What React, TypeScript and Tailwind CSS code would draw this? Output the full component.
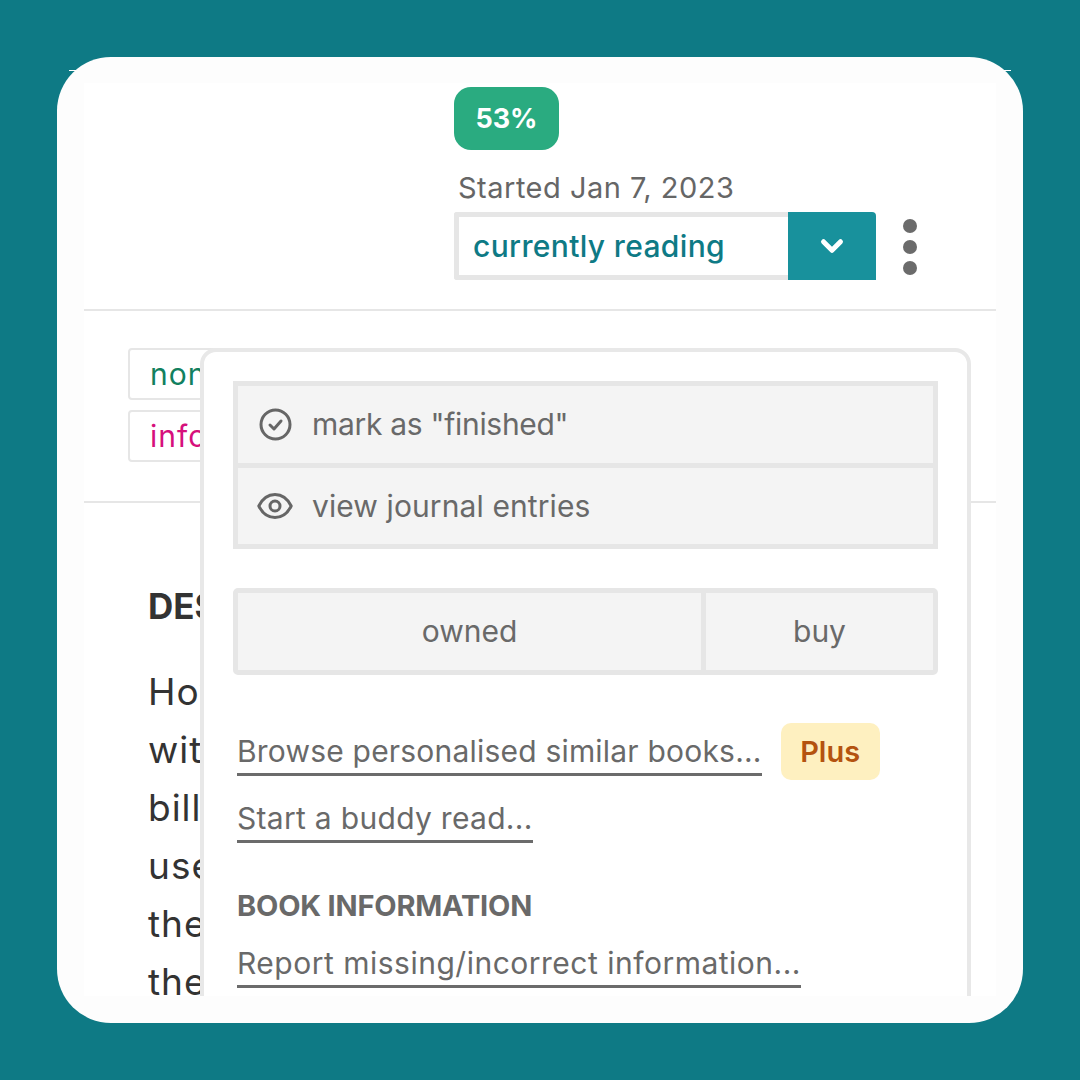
import { ChevronDown } from "lucide-react";

const font = "font-['Inter','Liberation_Sans',sans-serif]";

const bodyLines = ["How", "with", "bill", "use", "the", "the"];

function CircleCheckIcon() {
  return (
    <svg width="33" height="33" viewBox="0 0 33 33" fill="none" stroke="#666" strokeWidth="3">
      <circle cx="16.500" cy="16.500" r="14.500" />
      <path d="M11 17l4 4 7-8" strokeLinecap="round" strokeLinejoin="round" />
    </svg>
  );
}

function EyeIcon() {
  return (
    <svg width="36" height="28" viewBox="0 0 36 28" fill="none" stroke="#666" strokeWidth="3">
      <path d="M1.800 14C5.500 6.500 11 2.500 18 2.500S30.500 6.500 34.200 14C30.500 21.500 25 25.500 18 25.500S5.500 21.500 1.800 14Z" strokeLinejoin="round" />
      <circle cx="18" cy="14" r="5" />
    </svg>
  );
}

function UnderlinedLink({ children, tracking }: { children: string; tracking: string }) {
  return (
    <a className={`inline-block border-b-[3px] border-[#6b6b6b] pb-[2px] text-[30px] leading-[40px] text-[#696969] ${tracking}`}>
      {children}
    </a>
  );
}

function Popover() {
  return (
    <div className="absolute left-[116px] top-[265px] h-[700px] w-[771px] rounded-t-[16px] border-4 border-[#e8e8e8] bg-white px-[29px] pt-[29px]">
      <div className="border-[5px] border-[#e6e6e6] bg-[#f4f4f4] text-[30px] text-[#696969]">
        <div className="flex h-[77px] items-center gap-[20px] pl-[21px]">
          <CircleCheckIcon />
          <span className="tracking-[-0.3px]">mark as "finished"</span>
        </div>
        <div className="flex h-[81px] items-center gap-[19px] border-t-[5px] border-[#e6e6e6] pl-[19px]">
          <EyeIcon />
          <span className="tracking-[0.1px]">view journal entries</span>
        </div>
      </div>

      <div className="mt-[39px] flex h-[87px] rounded-[5px] border-[5px] border-[#e6e6e6] bg-[#f4f4f4] text-[30px] text-[#696969]">
        <div className="flex w-[468px] items-center justify-center border-r-[5px] border-[#e6e6e6]">owned</div>
        <div className="flex flex-1 items-center justify-center">buy</div>
      </div>

      <div className="pl-[4px]">
        <div className="mt-[48px] flex items-center gap-[19px]">
          <UnderlinedLink tracking="tracking-[0.2px]">Browse personalised similar books...</UnderlinedLink>
          <span className="mb-[4px] flex h-[57px] w-[99px] items-center justify-center rounded-[10px] bg-[#fef0c0] text-[29px] font-semibold text-[#b4530f]">
            Plus
          </span>
        </div>
        <div className="mt-[14px]">
          <UnderlinedLink tracking="tracking-[0.3px]">Start a buddy read...</UnderlinedLink>
        </div>
        <h3 className="mt-[43px] text-[29px] font-bold leading-[40px] tracking-[-0.2px] text-[#696969]">BOOK INFORMATION</h3>
        <div className="mt-[17px]">
          <UnderlinedLink tracking="tracking-[0.5px]">Report missing/incorrect information...</UnderlinedLink>
        </div>
      </div>
    </div>
  );
}

export default function App() {
  return (
    <div className={`${font} relative h-[1080px] w-[1080px] bg-[#0e7a85] p-[57px]`}>
      <span className="absolute left-[69px] top-[70px] h-px w-[942px] bg-white" />
      <div className="relative h-[966px] overflow-hidden rounded-[54px] bg-[#fdfdfd] px-[27px] pb-[27px] pt-[26px]">
        <div className="relative h-[913px] overflow-hidden bg-white">
          <div className="flex h-[228px] flex-col border-b-2 border-[#e6e6e6] pl-[370px] pt-[4px]">
            <span className="flex h-[63px] w-[105px] items-center justify-center rounded-[17px] bg-[#2aab80] pt-[1px] text-[27px] font-bold text-white">
              53%
            </span>
            <span className="ml-[4px] mt-[20px] text-[29px] leading-[36px] tracking-[0.5px] text-[#666]">Started Jan 7, 2023</span>
            <div className="mt-[6px] flex items-center">
              <div className="flex h-[68px] w-[334px] items-center rounded-l-[3px] border-y-[5px] border-l-[5px] border-[#e6e6e6] pl-[14px] text-[30px] font-medium tracking-[0.35px] text-[#0e7a85]">
                currently reading
              </div>
              <div className="flex h-[68px] w-[88px] items-center justify-center rounded-tr-[4px] bg-[#18919c] text-white">
                <ChevronDown size={34} strokeWidth={3.5} />
              </div>
              <div className="ml-[27px] mt-[2px] flex flex-col gap-[7px]">
                <span className="size-[14px] rounded-full bg-[#6b6b6b]" />
                <span className="size-[14px] rounded-full bg-[#6b6b6b]" />
                <span className="size-[14px] rounded-full bg-[#6b6b6b]" />
              </div>
            </div>
          </div>

          <div className="flex h-[192px] flex-col gap-[10px] border-b-2 border-[#e6e6e6] pl-[44px] pt-[37px] text-[30px] tracking-[1px]">
            <span className="flex h-[52px] w-[100px] items-center overflow-hidden rounded-[4px] border-2 border-[#e6e6e6] pl-[20px] text-[#12805f]">nonfiction</span>
            <span className="flex h-[52px] w-[100px] items-center overflow-hidden rounded-[4px] border-2 border-[#e6e6e6] pl-[20px] text-[#d6107c]">informative</span>
          </div>

          <div className="pl-[64px] pt-[79px] text-[#333]">
            <h2 className="text-[35px] font-bold leading-[48px]">DESCRIPTION</h2>
            <div className="mt-[33px] text-[37px] leading-[58px] tracking-[1px]">
              {bodyLines.map((line, i) => (
                <p key={i}>{line}</p>
              ))}
            </div>
          </div>

          <Popover />
        </div>
      </div>
    </div>
  );
}
